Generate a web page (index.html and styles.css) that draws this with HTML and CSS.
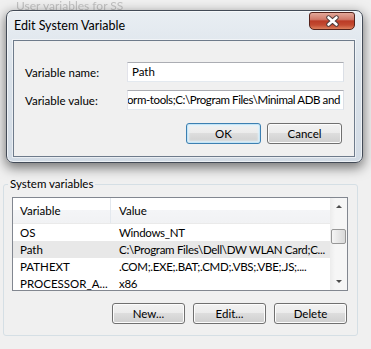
FILE: index.html
```html
<!DOCTYPE html>
<html lang="en">
<head>
    <meta charset="UTF-8">
    <meta name="viewport" content="width=device-width, initial-scale=1.0">
    <title>Edit System Variable</title>
    <link rel="stylesheet" href="styles.css">
</head>
<body>
    <!-- Environment Variables window (behind) -->
    <div class="envwin">
        <div class="user-group">
            <p class="ghost">User variables for SS</p>
        </div>
        <fieldset class="group">
            <legend>System variables</legend>
            <div class="listview">
                <div class="lv-body">
                    <div class="lv-row lv-head">
                        <span class="c1">Variable</span>
                        <span class="c2">Value</span>
                    </div>
                    <div class="lv-row">
                        <span class="c1">OS</span>
                        <span class="c2">Windows_NT</span>
                    </div>
                    <div class="lv-row sel">
                        <span class="c1">Path</span>
                        <span class="c2">C:\Program Files\Dell\DW WLAN Card;C...</span>
                    </div>
                    <div class="lv-row">
                        <span class="c1">PATHEXT</span>
                        <span class="c2">.COM;.EXE;.BAT;.CMD;.VBS;.VBE;.JS;....</span>
                    </div>
                    <div class="lv-row">
                        <span class="c1">PROCESSOR_A...</span>
                        <span class="c2">x86</span>
                    </div>
                </div>
                <div class="vscroll">
                    <span class="sb-btn up"></span>
                    <span class="thumb"></span>
                    <span class="sb-space"></span>
                    <span class="sb-btn down"></span>
                </div>
            </div>
            <div class="btn-row">
                <button class="btn">New...</button>
                <button class="btn">Edit...</button>
                <button class="btn">Delete</button>
            </div>
        </fieldset>
    </div>

    <!-- Edit System Variable dialog -->
    <div class="dialog">
        <div class="titlebar">
            <span class="title">Edit System Variable</span>
            <button class="close">
                <svg width="15" height="12" viewBox="0 0 15 12">
                    <path d="M3.5 2.5 L11.5 9.5 M11.5 2.5 L3.5 9.5" stroke="#4a3a3a" stroke-width="4.4" stroke-linecap="round"/>
                    <path d="M3.5 2.5 L11.5 9.5 M11.5 2.5 L3.5 9.5" stroke="#ffffff" stroke-width="2.6" stroke-linecap="round"/>
                </svg>
            </button>
        </div>
        <div class="client">
            <div class="field">
                <label>Variable name:</label>
                <div class="textbox">Path</div>
            </div>
            <div class="field">
                <label>Variable value:</label>
                <div class="textbox scrolled">orm-tools;C:\Program Files\Minimal ADB and</div>
            </div>
            <div class="dlg-buttons">
                <button class="btn default">OK</button>
                <button class="btn">Cancel</button>
            </div>
        </div>
    </div>
</body>
</html>
```
FILE: styles.css
```css
* {
    box-sizing: border-box;
}

body {
    margin: 0;
    width: 371px;
    height: 349px;
    overflow: hidden;
    position: relative;
    background-color: #f0f0f0;
    font-family: Lato, Roboto, sans-serif;
    font-size: 11.5px;
    color: #000;
}

/* back window */
.user-group {
    height: 176px;
}

.ghost {
    margin: 0;
    padding-left: 16px;
    line-height: 12px;
    font-size: 12px;
    color: #c2c2c2;
    filter: blur(0.7px);
}

.group {
    margin: 0 13px 0 3px;
    padding: 5px 9px 11px 4px;
    border: 1px solid #d5dfe5;
    border-radius: 3px;
}

.group legend {
    padding: 0 2px;
    line-height: 16px;
}

.listview {
    margin-left: 4px;
    height: 94px;
    border: 1px solid #828790;
    background: white;
    display: flex;
}

.lv-body {
    flex: 1;
    overflow: hidden;
}

.lv-row {
    display: flex;
    align-items: center;
    height: 17px;
    white-space: nowrap;
}

.lv-head {
    height: 26px;
    background: linear-gradient(#ffffff 0%, #ffffff 48%, #f4f5f7 48%, #f1f2f4 100%);
    border-bottom: 1px solid #eaeaea;
}

.c1 {
    width: 98px;
    padding-left: 7px;
    overflow: hidden;
}

.c2 {
    flex: 1;
    padding-left: 8px;
    overflow: hidden;
    letter-spacing: -0.3px;
}

.lv-head .c1 {
    height: 100%;
    display: flex;
    align-items: center;
    border-right: 1px solid #e3e8ee;
}

.lv-head .c2 {
    letter-spacing: 0;
}

.sel {
    background-color: #e8e8e8;
}

.vscroll {
    width: 17px;
    display: flex;
    flex-direction: column;
    background: linear-gradient(90deg, #ececec, #f6f6f6 30%, #f6f6f6);
}

.sb-btn {
    height: 17px;
    display: flex;
    align-items: center;
    justify-content: center;
}

.sb-btn::before {
    content: "";
    border-left: 3px solid transparent;
    border-right: 3px solid transparent;
}

.sb-btn.up::before {
    border-bottom: 3px solid #4d4d4d;
}

.sb-btn.down::before {
    border-top: 3px solid #4d4d4d;
}

.thumb {
    margin: 14px 1px 0 1px;
    height: 15px;
    border: 1px solid #979797;
    border-radius: 2px;
    background: linear-gradient(90deg, #f5f5f5, #e6e6e6 50%, #d9d9d9);
}

.sb-space {
    flex: 1;
}

.btn-row {
    display: flex;
    justify-content: flex-end;
    gap: 8px;
    margin: 12px 1px 0 4px;
}

.btn {
    width: 73px;
    height: 21px;
    padding: 0;
    font: inherit;
    color: #000;
    border: 1px solid #707070;
    border-radius: 3px;
    background: linear-gradient(#f2f2f2 0%, #ebebeb 50%, #dddddd 50%, #cfcfcf 100%);
    box-shadow: inset 0 0 0 1px #fcfcfc;
}

/* modal dialog */
.dialog {
    position: absolute;
    left: 6px;
    top: 10px;
    width: 357px;
    height: 153px;
    padding: 0 7px 5px 6px;
    display: flex;
    flex-direction: column;
    border: 1px solid #434b57;
    border-radius: 7px;
    background: linear-gradient(#e9eef3, #dae2ea 40%, #d2dbe5);
    box-shadow: 0 4px 12px 1px rgba(0, 0, 0, 0.5), inset 0 0 0 1px rgba(255, 255, 255, 0.6);
}

.titlebar {
    height: 29px;
    display: flex;
    align-items: center;
    padding-left: 1px;
}

.title {
    font-size: 12.5px;
}

.close {
    align-self: flex-start;
    margin: 1px 0 0 auto;
    width: 46px;
    height: 18px;
    padding: 0;
    display: flex;
    align-items: center;
    justify-content: center;
    border: 1px solid #54231c;
    border-radius: 3px 3px 5px 5px;
    background: linear-gradient(#e3a89a 0%, #d07a6a 40%, #bb3b26 50%, #c34a31 75%, #dd7f5c 100%);
}

.client {
    flex: 1;
    padding: 21px 10px 0 11px;
    border: 1px solid #6e7b8b;
    background-color: #f0f0f0;
    box-shadow: 0 0 0 1px rgba(255, 255, 255, 0.5);
}

.field {
    display: flex;
    align-items: center;
}

.field + .field {
    margin-top: 8px;
}

.field label {
    width: 102px;
}

.textbox {
    flex: 1;
    height: 20px;
    padding-left: 4px;
    line-height: 18px;
    white-space: nowrap;
    overflow: hidden;
    background: white;
    border: 1px solid;
    border-color: #abadb3 #dbdfe6 #e3e9ef #e2e3ea;
}

.textbox.scrolled {
    text-indent: -5px;
    letter-spacing: -0.4px;
}

.dlg-buttons {
    display: flex;
    justify-content: flex-end;
    gap: 6px;
    margin-top: 13px;
    padding-right: 2px;
}

.dlg-buttons .btn {
    width: 75px;
}

.btn.default {
    border-color: #3c7fb1;
    box-shadow: inset 0 0 0 1px #c4e5f6, inset 0 0 2px 2px #e0f1fb;
}
```
